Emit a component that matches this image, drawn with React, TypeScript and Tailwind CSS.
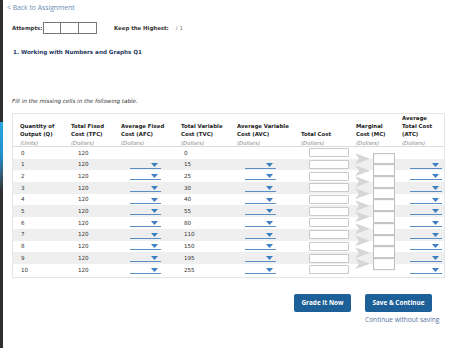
const rows = [
  { q: 0, tfc: 120, tvc: 0 },
  { q: 1, tfc: 120, tvc: 15 },
  { q: 2, tfc: 120, tvc: 25 },
  { q: 3, tfc: 120, tvc: 30 },
  { q: 4, tfc: 120, tvc: 40 },
  { q: 5, tfc: 120, tvc: 55 },
  { q: 6, tfc: 120, tvc: 80 },
  { q: 7, tfc: 120, tvc: 110 },
  { q: 8, tfc: 120, tvc: 150 },
  { q: 9, tfc: 120, tvc: 195 },
  { q: 10, tfc: 120, tvc: 255 },
];

const headers = [
  { lines: ["Quantity of", "Output (Q)"], unit: "(Units)" },
  { lines: ["Total Fixed", "Cost (TFC)"], unit: "(Dollars)" },
  { lines: ["Average Fixed", "Cost (AFC)"], unit: "(Dollars)" },
  { lines: ["Total Variable", "Cost (TVC)"], unit: "(Dollars)" },
  { lines: ["Average Variable", "Cost (AVC)"], unit: "(Dollars)" },
  { lines: ["Total Cost"], unit: "(Dollars)" },
  { lines: ["Marginal", "Cost (MC)"], unit: "(Dollars)" },
  { lines: ["Average", "Total Cost", "(ATC)"], unit: "(Dollars)" },
];

const cols = "grid grid-cols-[51px_50px_60px_56px_64px_55px_46px_51px]";

function Dropdown({ w }: { w: number }) {
  return (
    <div className="flex h-[8px] items-end justify-end border-b border-[#5b8ec4] pr-[3px] pb-[1px]" style={{ width: w }}>
      <svg width="7" height="4" viewBox="0 0 7 4">
        <polygon points="0,0 7,0 3.5,4" fill="#3d7fc2" />
      </svg>
    </div>
  );
}

function Chevron() {
  return (
    <svg width="15" height="11" viewBox="0 0 15 11" className="mr-[3px]">
      <polygon points="0,0 15,5.5 0,11 4,5.5" fill="#d6d6d6" />
    </svg>
  );
}

export default function App() {
  return (
    <div className="flex h-[348px] w-[474px] overflow-hidden bg-white font-['DejaVu_Sans',sans-serif] text-[#333]">
      <div className="flex w-[3px] flex-col bg-[#2f2f2f]">
        <div className="h-[122px]" />
        <div className="h-[70px] bg-gradient-to-b from-[#2aa7e4] via-[#1f8cc8] to-[#2f2f2f]" />
      </div>

      <div className="flex-1">
        <div className="pl-[4px] pt-[3px] font-['Open_Sans',sans-serif] text-[6.8px] leading-[10px] text-[#6b8cb3]">
          &lt; Back to Assignment
        </div>

        <div className="mt-[9px] flex h-[12px] items-center pl-[9px]">
          <span className="w-[31px] text-[5.4px] font-semibold text-[#333]">Attempts:</span>
          <div className="flex h-[12px]">
            <div className="h-[12px] w-[18px] border border-[#777]" />
            <div className="h-[12px] w-[18px] border border-l-0 border-[#777]" />
            <div className="h-[12px] w-[18px] border border-l-0 border-[#777]" />
          </div>
          <span className="ml-[17px] text-[5.4px] font-semibold text-[#333]">Keep the Highest:</span>
          <span className="ml-[7px] text-[5.6px] text-[#777]">/ 1</span>
        </div>

        <div className="mt-[14px] pl-[10px] text-[5.6px] font-bold leading-[8px] text-[#1f3a5f]">
          1. Working with Numbers and Graphs Q1
        </div>

        <div className="mt-[41px] pl-[9px] text-[5.6px] italic leading-[8px] text-[#333]">
          Fill in the missing cells in the following table.
        </div>

        <div className="ml-[9px] mt-[8px] w-[433px] border border-[#e6e6e6] pb-[1px]">
          <div className={`${cols} h-[33px] border-b border-[#dcdcdc]`}>
            {headers.map((h, i) => (
              <div key={i} className="flex flex-col justify-end pl-[7px] text-[5.4px] leading-[8.2px] whitespace-nowrap">
                {h.lines.map((l) => (
                  <div key={l} className="font-bold text-[#222]">{l}</div>
                ))}
                <div className="italic text-[#8a8a8a]">{h.unit}</div>
              </div>
            ))}
          </div>

          {rows.map((r, i) => (
            <div key={r.q} className={`${cols} h-[11.7px] items-center text-[5.6px] ${i % 2 === 1 ? "bg-[#efefef]" : "bg-white"}`}>
              <div className="pl-[8px]">{r.q}</div>
              <div className="pl-[14px]">{r.tfc}</div>
              <div className="pl-[16px]">{i > 0 && <Dropdown w={31} />}</div>
              <div className="pl-[10px]">{r.tvc}</div>
              <div className="pl-[15px]">{i > 0 && <Dropdown w={31} />}</div>
              <div className="pl-[15px]">
                <div className="h-[9px] w-[40px] rounded-[1px] border border-[#c9c9c9] bg-white" />
              </div>
              <div className="h-full pl-[6px]">
                {i > 0 && (
                  <div className="flex h-[11.7px] -translate-y-[5.85px] items-center">
                    <Chevron />
                    <div className="h-[11.7px] w-[22px] border border-[#bdbdbd] bg-white" />
                  </div>
                )}
              </div>
              <div className="pl-[15px]">{i > 0 && <Dropdown w={32} />}</div>
            </div>
          ))}
        </div>

        <div className="mt-[16px] flex justify-end pr-[34px] font-['Open_Sans',sans-serif]">
          <button className="flex h-[18px] w-[57px] items-center justify-center rounded-[2px] bg-[#1d5f97] text-[6.4px] font-bold text-white">
            Grade It Now
          </button>
          <div className="ml-[14px] flex w-[75px] flex-col items-start">
            <button className="flex h-[18px] w-[67px] items-center justify-center rounded-[2px] bg-[#1d5f97] text-[6.4px] font-bold text-white">
              Save &amp; Continue
            </button>
            <div className="mt-[3px] whitespace-nowrap text-[6.6px] leading-[9px] text-[#5373a0]">Continue without saving</div>
          </div>
        </div>
      </div>
    </div>
  );
}
